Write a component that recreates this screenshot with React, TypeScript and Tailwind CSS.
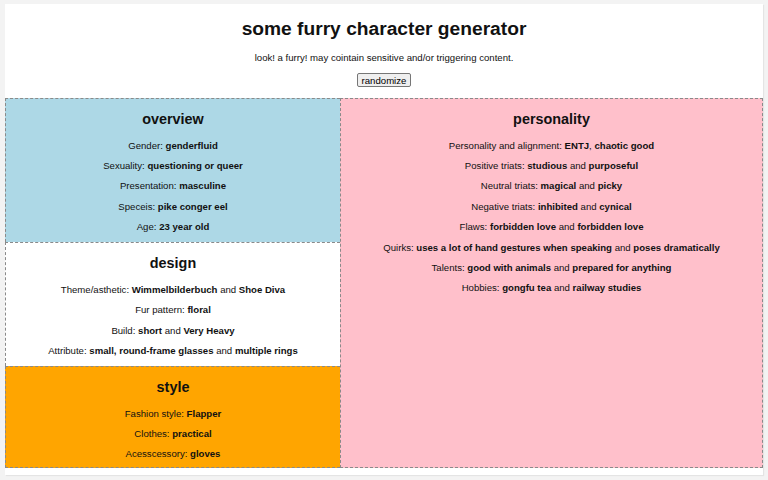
import React from "react";

type Item = { label: string; parts: string[] };

function Line({ item }: { item: Item }) {
  return (
    <p className="text-[9.6px] leading-[11px]">
      {item.label}:{" "}
      {item.parts.map((p, i) => (
        <React.Fragment key={i}>
          {i > 0 && (item.label === "Personality and alignment" ? ", " : " and ")}
          <b className="font-bold">{p}</b>
        </React.Fragment>
      ))}
    </p>
  );
}

function Section({
  title,
  items,
  className,
}: {
  title: string;
  items: Item[];
  className: string;
}) {
  return (
    <div className={"border-dashed border-[#8a8a8a] pt-[12px] text-center " + className}>
      <h2 className="text-[14.4px] leading-[17px] font-bold">{title}</h2>
      <div className="mt-[12px] flex flex-col gap-[9.4px]">
        {items.map((it, i) => (
          <Line key={i} item={it} />
        ))}
      </div>
    </div>
  );
}

export default function App() {
  const overview: Item[] = [
    { label: "Gender", parts: ["genderfluid"] },
    { label: "Sexuality", parts: ["questioning or queer"] },
    { label: "Presentation", parts: ["masculine"] },
    { label: "Speceis", parts: ["pike conger eel"] },
    { label: "Age", parts: ["23 year old"] },
  ];
  const design: Item[] = [
    { label: "Theme/asthetic", parts: ["Wimmelbilderbuch", "Shoe Diva"] },
    { label: "Fur pattern", parts: ["floral"] },
    { label: "Build", parts: ["short", "Very Heavy"] },
    { label: "Attribute", parts: ["small, round-frame glasses", "multiple rings"] },
  ];
  const style: Item[] = [
    { label: "Fashion style", parts: ["Flapper"] },
    { label: "Clothes", parts: ["practical"] },
    { label: "Acesscessory", parts: ["gloves"] },
  ];
  const personality: Item[] = [
    { label: "Personality and alignment", parts: ["ENTJ", "chaotic good"] },
    { label: "Positive triats", parts: ["studious", "purposeful"] },
    { label: "Neutral triats", parts: ["magical", "picky"] },
    { label: "Negative triats", parts: ["inhibited", "cynical"] },
    { label: "Flaws", parts: ["forbidden love", "forbidden love"] },
    { label: "Quirks", parts: ["uses a lot of hand gestures when speaking", "poses dramatically"] },
    { label: "Talents", parts: ["good with animals", "prepared for anything"] },
    { label: "Hobbies", parts: ["gongfu tea", "railway studies"] },
  ];

  return (
    <div
      className="w-[768px] h-[480px] bg-[#f3f3f3] pt-[4px] pl-[5px] text-[#111]"
      style={{ fontFamily: '"Liberation Sans", Arial, sans-serif' }}
    >
      <div className="w-[758px] h-[471px] bg-white shadow-[1px_1px_1px_rgba(0,0,0,0.06)] pt-[14px] pb-[7px] flex flex-col">
        <h1 className="text-center text-[19.2px] leading-[22px] font-bold">
          some furry character generator
        </h1>
        <p className="mt-[11.5px] text-center text-[9.6px] leading-[11px]">
          look! a furry! may cointain sensitive and/or triggering content.
        </p>
        <div className="mt-[10.5px] flex justify-center">
          <button className="px-[3.6px] py-[0.6px] border border-[#767676] rounded-[2px] bg-[#efefef] text-[9.6px] leading-[11px] text-black">
            randomize
          </button>
        </div>
        <div className="mt-[10.5px] flex flex-1 min-h-0">
          <div className="w-[335px] flex flex-col">
            <Section title="overview" items={overview} className="bg-[#add8e6] border-l border-t pb-[9.6px]" />
            <Section title="design" items={design} className="bg-white border-l border-t pb-[9.6px]" />
            <Section title="style" items={style} className="bg-[#ffa500] border-l border-t border-b flex-1" />
          </div>
          <div className="flex-1">
            <Section title="personality" items={personality} className="bg-[#ffc0cb] border h-full" />
          </div>
        </div>
      </div>
    </div>
  );
}
